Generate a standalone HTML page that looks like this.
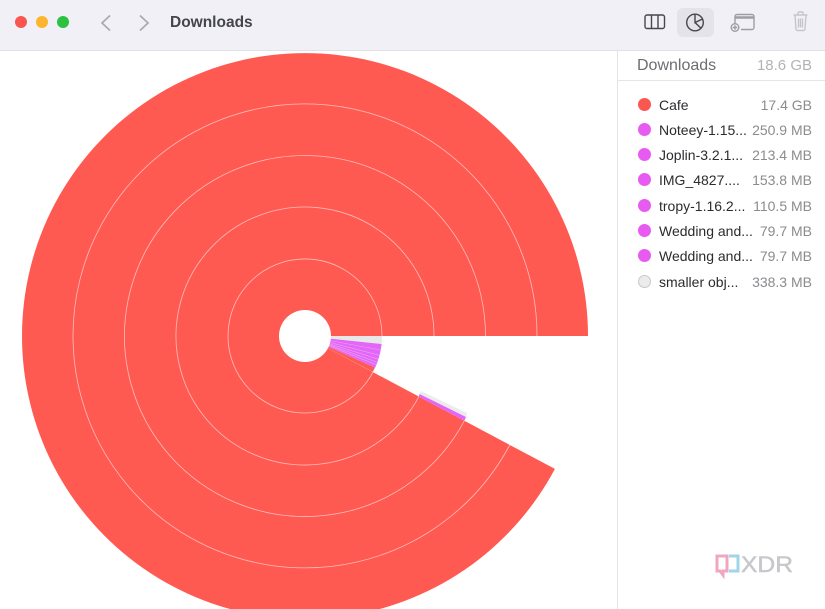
<!DOCTYPE html>
<html><head><meta charset="utf-8"><style>
html,body{margin:0;padding:0;background:#fff}
body{width:825px;height:609px;position:relative;overflow:hidden;font-family:"Liberation Sans",sans-serif}
.a{position:absolute;white-space:nowrap}
#bar{left:0;top:0;width:825px;height:50px;background:#f1f0f7;border-bottom:1px solid #e2e2e6;box-sizing:content-box}
.dot{position:absolute;width:12px;height:12px;border-radius:50%;top:16px}
.row{position:absolute;left:618px;width:207px;height:25px;font-size:14px;line-height:27px}
.row i{position:absolute;left:20px;top:6px;width:13px;height:13px;border-radius:50%;background:#e85bf0}
.row b{position:absolute;left:41px;font-weight:normal;color:#2c2c30}
.row u{position:absolute;right:13px;text-decoration:none;color:#8b8b90}
</style></head><body>
<svg class="a" style="left:0;top:0" width="617" height="609" viewBox="0 0 617 609">
<path d="M305 336L588 336A283 283 0 1 0 554.9 468.9Z" fill="#ff5a52"/>
<path d="M305 336L375.2 367.6L373 372Z" fill="#ff5a52"/>
<path d="M305 336L382 336A77 77 0 0 1 381.6 344Z" fill="#e8e8e8"/>
<path d="M305 336L381.6 344A77 77 0 0 1 375.2 367.6Z" fill="#e266f8"/>
<g stroke="#f0a0f0" stroke-width=".6" fill="none">
<path d="M305 336L380.7 350M305 336L379.5 355.3M305 336L378.4 359.2M305 336L377.4 362.3M305 336L376.4 364.8"/>
</g>
<path d="M421 391L467 413L466 417L419.5 394Z" fill="#ececec"/>
<path d="M419.5 394L466 417L464.4 420.7L418.9 396.6Z" fill="#e266f8"/>
<g fill="none" stroke="#fff" stroke-opacity=".6" stroke-width=".8">
<path d="M382 336A77 77 0 1 0 375.2 367.6"/>
<path d="M434 336A129 129 0 1 0 418.9 396.6"/>
<path d="M485.5 336A180.5 180.5 0 1 0 464.4 420.7"/>
<path d="M537 336A232 232 0 1 0 509.8 444.9"/>
</g>
<circle cx="305" cy="336" r="26" fill="#fff"/>
</svg>

<div class="a" id="bar"></div>
<div class="dot" style="left:15px;background:#f9564f"></div>
<div class="dot" style="left:36px;background:#fcb52c"></div>
<div class="dot" style="left:57px;background:#2ac23f"></div>
<svg class="a" style="left:95px;top:10px" width="60" height="24" fill="none" stroke="#a9a9ae" stroke-width="1.7">
<path d="M15 5.5L7 13L15 20.5"/><path d="M45 5.5L53 13L45 20.5"/></svg>
<div class="a" style="left:170px;top:14px;font-size:15.5px;line-height:18px;font-weight:bold;color:#45454d">Downloads</div>

<div class="a" style="left:677px;top:8px;width:37px;height:29px;border-radius:6px;background:#e4e3ea"></div>
<svg class="a" style="left:640px;top:5px" width="185" height="36" fill="none">
<g stroke="#46464c" stroke-width="1.4">
<rect x="5" y="10" width="19.5" height="13.5" rx="2"/><path d="M11.5 10V23.5M18 10V23.5"/>
<circle cx="55" cy="17.5" r="8.3"/><path d="M55 9.2V17.5L62.5 14M55 17.5L61 23.3"/>
</g>
<g stroke="#9d9da2" stroke-width="1.4">
<path d="M95 19V11.5a2 2 0 0 1 2-2H112a2 2 0 0 1 2 2V22.5a2 2 0 0 1-2 2H101"/>
<path d="M95 12.500H114" stroke-width="2.4"/>
<circle cx="95" cy="22.500" r="3.800" fill="#f1f0f7"/><path d="M92.700 22.500H97.300M95 20.200V24.800"/>
</g>
<g stroke="#c6c6ca" stroke-width="1.4">
<path d="M153.500 10H167.500M158 10V8a1 1 0 0 1 1-1H162a1 1 0 0 1 1 1V10M155 10.500L156 24a1.500 1.500 0 0 0 1.500 1.500H163.500a1.500 1.500 0 0 0 1.500-1.500L166 10.500M158.500 13.500V22.500M160.500 13.500V22.500M162.500 13.500V22.500"/>
</g>
</svg>

<div class="a" style="left:617px;top:51px;width:1px;height:558px;background:#e4e4e6"></div>
<div class="a" style="left:618px;top:80px;width:207px;height:1px;background:#e6e6e8"></div>
<div class="a" style="left:637px;top:56px;font-size:16px;line-height:19px;color:#6d6d72">Downloads</div>
<div class="a" style="right:13px;top:56px;font-size:15px;line-height:19px;color:#b3b3b7">18.6 GB</div>

<div class="row" style="top:92px"><i style="background:#f9574f"></i><b>Cafe</b><u>17.4 GB</u></div>
<div class="row" style="top:117px"><i></i><b>Noteey-1.15...</b><u>250.9 MB</u></div>
<div class="row" style="top:142px"><i></i><b>Joplin-3.2.1...</b><u>213.4 MB</u></div>
<div class="row" style="top:167px"><i></i><b>IMG_4827....</b><u>153.8 MB</u></div>
<div class="row" style="top:193px"><i></i><b>tropy-1.16.2...</b><u>110.5 MB</u></div>
<div class="row" style="top:218px"><i></i><b>Wedding and...</b><u>79.7 MB</u></div>
<div class="row" style="top:243px"><i></i><b>Wedding and...</b><u>79.7 MB</u></div>
<div class="row" style="top:269px"><i style="background:#ececec;box-shadow:inset 0 0 0 1px #c9c9c9"></i><b>smaller obj...</b><u>338.3 MB</u></div>

<svg class="a" style="left:712px;top:550px" width="84" height="34" fill="none">
<path d="M5 6H15V21H11V25L8 21H5Z" stroke="#f0a5c0" stroke-width="3"/>
<path d="M17 6H26V21H17" stroke="#9fd5e6" stroke-width="3"/>
<text x="29" y="22" font-family="Liberation Sans" font-size="22" fill="#c8c8cc" stroke="#c8c8cc" stroke-width=".5" textLength="52" lengthAdjust="spacingAndGlyphs">XDR</text>
</svg>
</body></html>
